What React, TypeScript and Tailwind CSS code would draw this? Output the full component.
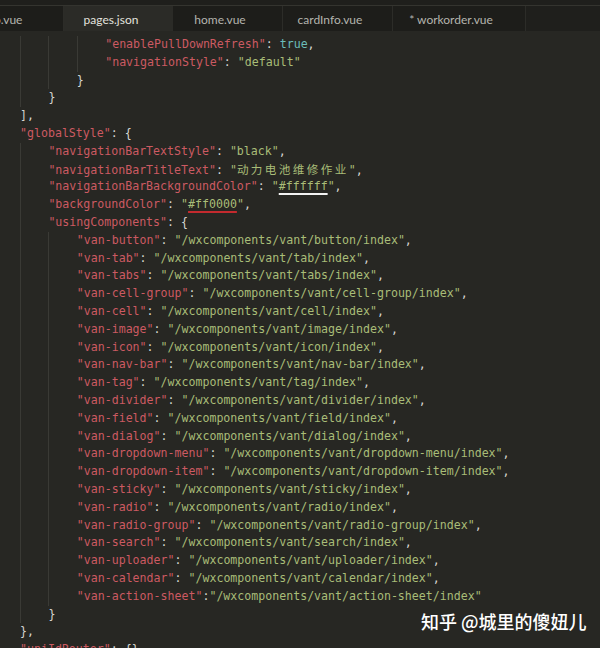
import React from "react";

type Kind = "k" | "s" | "p" | "b" | "cjk" | "uw" | "ur";
type Tok = [Kind, string];

const cls: Record<Kind, string> = {
  k: "text-[#cc5a62]",
  s: "text-[#a9bd78]",
  p: "text-[#d6d6d2]",
  b: "text-[#6cbdbb]",
  cjk: "text-[#a9bd78] tracking-[2.4px] font-['Noto_Sans_CJK_SC',sans-serif]",
  uw: "text-[#a9bd78] underline decoration-2 decoration-[#f2f2f2] underline-offset-[3px]",
  ur: "text-[#a9bd78] underline decoration-2 decoration-[#c42a2e] underline-offset-[3px]",
};

type Row = { level: number; toks: Tok[] };

const kv = (level: number, key: string, val: string, comma = true): Row => ({
  level,
  toks: [
    ["k", `"${key}"`],
    ["p", ": "],
    ["s", `"${val}"`],
    ...(comma ? ([["p", ","]] as Tok[]) : []),
  ],
});

const vants = [
  "button",
  "tab",
  "tabs",
  "cell-group",
  "cell",
  "image",
  "icon",
  "nav-bar",
  "tag",
  "divider",
  "field",
  "dialog",
  "dropdown-menu",
  "dropdown-item",
  "sticky",
  "radio",
  "radio-group",
  "search",
  "uploader",
  "calendar",
];

const rows: Row[] = [
  { level: 3, toks: [["k", '"enablePullDownRefresh"'], ["p", ": "], ["b", "true"], ["p", ","]] },
  kv(3, "navigationStyle", "default", false),
  { level: 2, toks: [["p", "}"]] },
  { level: 1, toks: [["p", "}"]] },
  { level: 0, toks: [["p", "],"]] },
  { level: 0, toks: [["k", '"globalStyle"'], ["p", ": {"]] },
  kv(1, "navigationBarTextStyle", "black"),
  {
    level: 1,
    toks: [["k", '"navigationBarTitleText"'], ["p", ": "], ["s", '"'], ["cjk", "动力电池维修作业"], ["s", '"'], ["p", ","]],
  },
  {
    level: 1,
    toks: [["k", '"navigationBarBackgroundColor"'], ["p", ": "], ["s", '"'], ["uw", "#ffffff"], ["s", '"'], ["p", ","]],
  },
  {
    level: 1,
    toks: [["k", '"backgroundColor"'], ["p", ": "], ["s", '"'], ["ur", "#ff0000"], ["s", '"'], ["p", ","]],
  },
  { level: 1, toks: [["k", '"usingComponents"'], ["p", ": {"]] },
  ...vants.map((v) => kv(2, `van-${v}`, `/wxcomponents/vant/${v}/index`)),
  {
    level: 2,
    toks: [["k", '"van-action-sheet"'], ["p", ":"], ["s", '"/wxcomponents/vant/action-sheet/index"']],
  },
  { level: 1, toks: [["p", "}"]] },
  { level: 0, toks: [["p", "},"]] },
  { level: 0, toks: [["k", '"uniIdRouter"'], ["p", ": {}"]] },
];

const tabs = [
  { name: "pages.json", active: true },
  { name: "home.vue", active: false },
  { name: "cardInfo.vue", active: false },
  { name: "* workorder.vue", active: false },
];

export default function App() {
  return (
    <div className="relative flex h-[648px] w-[600px] flex-col overflow-hidden bg-[#272723]">
      {/* top strip */}
      <div className="h-[6px] shrink-0 border-b border-[#34342f] bg-[#1f1f1c]" />
      {/* tab bar */}
      <div className="flex h-[25px] shrink-0 bg-[#1d1d1a] font-['Lato',sans-serif] text-[12px]">
        <div className="flex w-[64px] items-center overflow-hidden border-r border-[#2c2c28] pt-[3px] text-[#b4b4ae]">
          <span className="ml-[-6px] whitespace-nowrap">o.vue</span>
        </div>
        {tabs.map((t) => (
          <div
            key={t.name}
            className={
              t.active
                ? "flex w-[109px] items-center justify-center bg-[#2b2b27] pr-[15px] pt-[3px] text-[#e2e2de]"
                : t.name.startsWith("*")
                ? "flex w-[133px] items-center justify-center border-r border-[#2c2c28] pr-[16px] pt-[3px] text-[#b4b4ae]"
                : "flex w-[110px] items-center justify-center border-r border-[#2c2c28] pr-[15px] pt-[3px] text-[#b4b4ae]"
            }
          >
            <span className="whitespace-nowrap">{t.name}</span>
          </div>
        ))}
        <div className="flex-1 bg-[#1f1f1c]" />
      </div>
      {/* code */}
      <div className="flex flex-col pl-[20px] pt-[5px] font-['DejaVu_Sans_Mono',monospace] text-[11.6px]">
        {rows.map((r, i) => (
          <div key={i} className="flex h-[17.8px] shrink-0 items-stretch whitespace-pre leading-[17.8px]">
            {Array.from({ length: r.level }).map((_, j) => (
              <span key={j} className="w-[28.4px] shrink-0 border-l border-[#3a3a35]" />
            ))}
            <span>
              {r.toks.map(([k, t], j) => (
                <span key={j} className={cls[k]}>
                  {t}
                </span>
              ))}
            </span>
          </div>
        ))}
      </div>
      {/* watermark */}
      <div className="absolute left-[421px] top-[608px] whitespace-nowrap font-['Noto_Sans_CJK_SC',sans-serif] text-[18px] font-medium leading-[26px] text-white">
        知乎 @城里的傻妞儿
      </div>
    </div>
  );
}
